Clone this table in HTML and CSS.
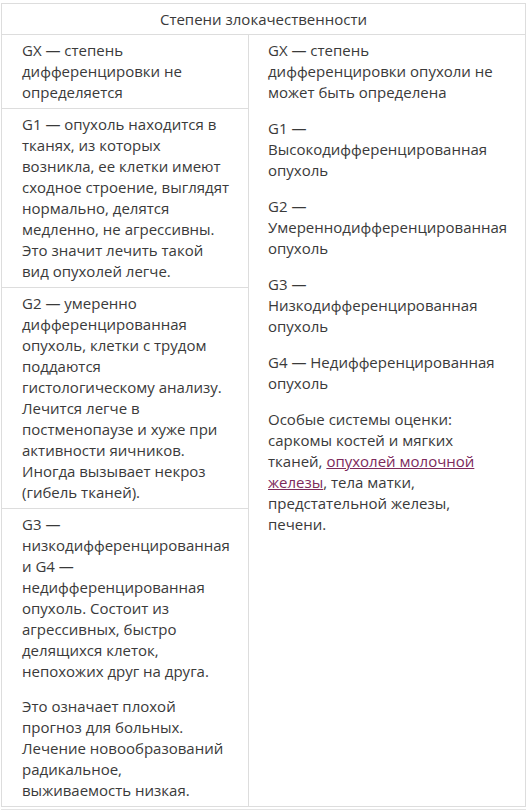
FILE: index.html
```html
<!DOCTYPE html>
<html lang="ru">

<head>
    <meta charset="utf-8">
    <meta name="viewport" content="width=device-width, initial-scale=1.0">
    <title>Степени злокачественности</title>
    <link rel="stylesheet" href="styles.css">
</head>

<body>
    <table class="stepeni">
        <colgroup>
            <col class="col_venstre">
            <col class="col_hoejre">
        </colgroup>
        <tr>
            <th colspan="2">Степени злокачественности</th>
        </tr>
        <tr>
            <td>
                <p>GX — степень дифференцировки не определяется</p>
            </td>
            <td rowspan="4" class="hoejre">
                <p>GX — степень дифференцировки опухоли не может быть определена</p>
                <p>G1 — Высокодифференцированная опухоль</p>
                <p>G2 — Умереннодифференцированная опухоль</p>
                <p>G3 — Низкодифференцированная опухоль</p>
                <p>G4 — Недифференцированная опухоль</p>
                <p>Особые системы оценки: саркомы костей и мягких тканей, <a href="#">опухолей молочной железы</a>, тела матки, предстательной железы, печени.</p>
            </td>
        </tr>
        <tr>
            <td>
                <p>G1 — опухоль находится в тканях, из которых возникла, ее клетки имеют сходное строение, выглядят нормально, делятся медленно, не агрессивны. Это значит лечить такой вид опухолей легче.</p>
            </td>
        </tr>
        <tr>
            <td>
                <p>G2 — умеренно дифференцированная опухоль, клетки с трудом поддаются гистологическому анализу. Лечится легче в постменопаузе и хуже при активности яичников. Иногда вызывает некроз (гибель тканей).</p>
            </td>
        </tr>
        <tr>
            <td>
                <p>G3 — низкодифференцированная и G4 — недифференцированная опухоль. Состоит из агрессивных, быстро делящихся клеток, непохожих друг на друга.</p>
                <p>Это означает плохой прогноз для больных. Лечение новообразований радикальное, выживаемость низкая.</p>
            </td>
        </tr>
    </table>
    <div class="bund"></div>
</body>

</html>
```

FILE: styles.css
```css
body {
    margin: 0;
    padding: 3px 2px 0 1px;
    background-color: #fff;
    font-family: "Open Sans", "Noto Sans", sans-serif;
    font-size: 15px;
    line-height: 21px;
    color: #3a3a3a;
}

.stepeni {
    width: 525px;
    border-collapse: collapse;
    table-layout: fixed;
}

.col_venstre {
    width: 247px;
}

.stepeni th {
    font-weight: normal;
    text-align: center;
    padding: 5px 20px 4px;
    border: 1px solid #dddddd;
}

.stepeni td {
    vertical-align: top;
    padding: 5px 16px 5px 20px;
    border: 1px solid #dddddd;
}

.stepeni td.hoejre {
    padding-left: 19px;
    padding-right: 19px;
}

p {
    margin: 0 0 14px;
}

.hoejre p {
    margin-bottom: 15px;
}

p:last-child,
.hoejre p:last-child {
    margin-bottom: 0;
}

a {
    color: #7d2a5c;
    text-decoration: underline;
}

.bund {
    margin-top: 2px;
    height: 4px;
    background-color: #e4e4e4;
}
```
